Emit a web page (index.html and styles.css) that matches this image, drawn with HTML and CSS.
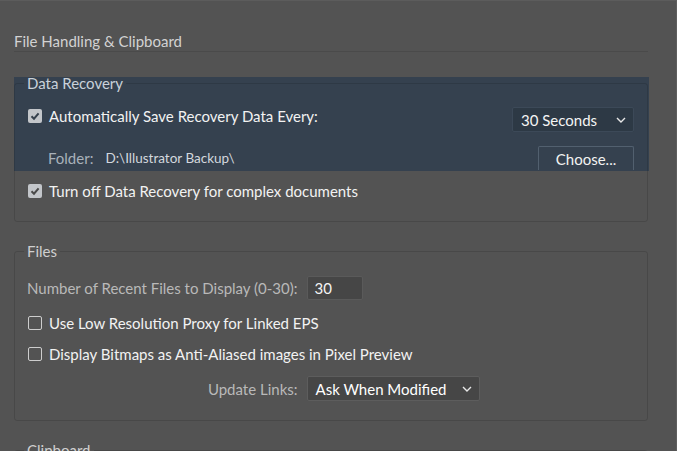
FILE: index.html
```html
<!DOCTYPE html>
<html>
<head>
<meta charset="utf-8">
<link rel="stylesheet" href="styles.css">
</head>
<body>
<div class="page">
  <div class="title">File Handling &amp; Clipboard</div>

  <div class="dr">
    <fieldset class="group group-dr">
      <legend>Data Recovery</legend>
      <div class="row row-save">
        <label class="check"><span class="box checked"><svg viewBox="0 0 14 14" width="14" height="14"><polyline points="3.5,7.2 6,9.7 10.6,4.4" fill="none" stroke="#36414d" stroke-width="2"/></svg></span><span class="lbl">Automatically Save Recovery Data Every:</span></label>
        <div class="select select-dark"><span>30 Seconds</span><svg class="chev" viewBox="0 0 10 6" width="10" height="6"><polyline points="1,1 5,5 9,1" fill="none" stroke="#e8e8e8" stroke-width="1.4"/></svg></div>
      </div>
      <div class="row row-folder">
        <span class="folder-lbl">Folder:</span>
        <span class="path">D:\Illustrator Backup\</span>
        <button class="btn">Choose...</button>
      </div>
      <div class="row row-turnoff">
        <label class="check"><span class="box checked"><svg viewBox="0 0 14 14" width="14" height="14"><polyline points="3.5,7.2 6,9.7 10.6,4.4" fill="none" stroke="#4a4a4a" stroke-width="2"/></svg></span><span class="lbl">Turn off Data Recovery for complex documents</span></label>
      </div>
    </fieldset>
  </div>

  <fieldset class="group group-files">
    <legend>Files</legend>
    <div class="files-grid">
      <span class="glabel first">Number of Recent Files to Display (0-30):</span>
      <div class="input">30</div>
      <label class="check span2 r2"><span class="box"></span><span class="lbl">Use Low Resolution Proxy for Linked EPS</span></label>
      <label class="check span2 r3"><span class="box"></span><span class="lbl">Display Bitmaps as Anti-Aliased images in Pixel Preview</span></label>
      <span class="glabel right r4">Update Links:</span>
      <div class="select select-grey r4"><span>Ask When Modified</span><svg class="chev" viewBox="0 0 10 6" width="10" height="6"><polyline points="1,1 5,5 9,1" fill="none" stroke="#e8e8e8" stroke-width="1.4"/></svg></div>
    </div>
  </fieldset>

  <fieldset class="group group-clip">
    <legend>Clipboard</legend>
    <div class="clip-body"></div>
  </fieldset>
</div>
</body>
</html>
```

FILE: styles.css
```css
html, body {
  margin: 0;
  padding: 0;
  overflow: hidden;
  background: #535353;
}
body {
  width: 677px;
  height: 451px;
  box-sizing: border-box;
  border-top: 1px solid #5c5c5c;
  border-right: 1px solid #5e5e5e;
  font-family: Lato, "Noto Sans", sans-serif;
  font-size: 15px;
  color: #f0f0f0;
}
.page {
  padding: 30px 28px 0 14px;
}
.title {
  line-height: 20px;
  color: #d2d2d2;
  border-bottom: 1px solid #4a4a4a;
}
.dr {
  position: relative;
  margin-top: 22px;
}
.dr::before {
  content: "";
  position: absolute;
  top: 3px;
  left: 0;
  right: -1px;
  height: 94px;
  background: #35414f;
}
.group {
  position: relative;
  margin: 0;
  border: 1px solid rgba(0, 0, 0, 0.12);
  border-radius: 3px;
  padding: 15px 13px 21px 12px;
  min-width: 0;
}
.group legend {
  padding: 0 3px;
  margin-left: -3px;
  line-height: 18px;
  color: #cfcfcf;
}
.group-dr legend {
  color: #c9d1da;
}
.row {
  display: flex;
  align-items: center;
}
.row-save {
  height: 25px;
  justify-content: space-between;
  align-items: flex-start;
}
.row-folder {
  height: 24px;
  margin-top: 14px;
}
.row-turnoff {
  margin-top: 12px;
}
.check {
  display: flex;
  align-items: center;
  height: 18px;
  margin-left: 1px;
  color: #f2f2f2;
}
.box {
  width: 14px;
  height: 14px;
  box-sizing: border-box;
  border: 1px solid #cdcdcd;
  border-radius: 2px;
  margin-right: 7px;
  flex: none;
  display: block;
}
.box.checked {
  border: none;
  background: #c3c6ca;
}
.box svg {
  display: block;
}
.select {
  display: flex;
  align-items: center;
  justify-content: space-between;
  height: 25px;
  box-sizing: border-box;
  border-radius: 2px;
  padding: 0 7px 0 8px;
  color: #f4f4f4;
}
.select-dark {
  width: 122px;
  background: #2d3945;
  border: 1px solid #3c4958;
}
.select-grey {
  width: 173px;
  background: #464646;
  border: 1px solid #5d5d5d;
  color: #ffffff;
}
.chev {
  display: block;
}
.folder-lbl {
  margin-left: 21px;
  color: #a9b1ba;
}
.path {
  margin-left: 12px;
  font-size: 13.5px;
  color: #d3d8de;
}
.btn {
  margin-left: auto;
  width: 96px;
  height: 24px;
  box-sizing: border-box;
  background: #35414f;
  border: 1px solid #52606f;
  border-bottom: none;
  border-radius: 2px 2px 0 0;
  color: #f2f2f2;
  font: inherit;
  padding: 0;
}
.group-dr {
  z-index: 1;
}
.group-files {
  margin-top: 20px;
  padding-top: 16px;
  padding-bottom: 19px;
}
.files-grid {
  display: grid;
  grid-template-columns: auto 1fr;
  column-gap: 9px;
  align-items: center;
}
.glabel {
  color: #b9b9b9;
}
.glabel.right {
  justify-self: end;
}
.input {
  width: 56px;
  height: 24px;
  box-sizing: border-box;
  background: #464646;
  border: 1px solid #5a5a5a;
  border-radius: 2px;
  padding-left: 7px;
  line-height: 22px;
  color: #f4f4f4;
}
.span2 {
  grid-column: 1 / 3;
}
.r2 {
  margin-top: 14px;
}
.r3 {
  margin-top: 13px;
}
.r4 {
  margin-top: 13px;
}
.group-clip {
  margin-top: 20px;
}
.clip-body {
  height: 60px;
}
```
